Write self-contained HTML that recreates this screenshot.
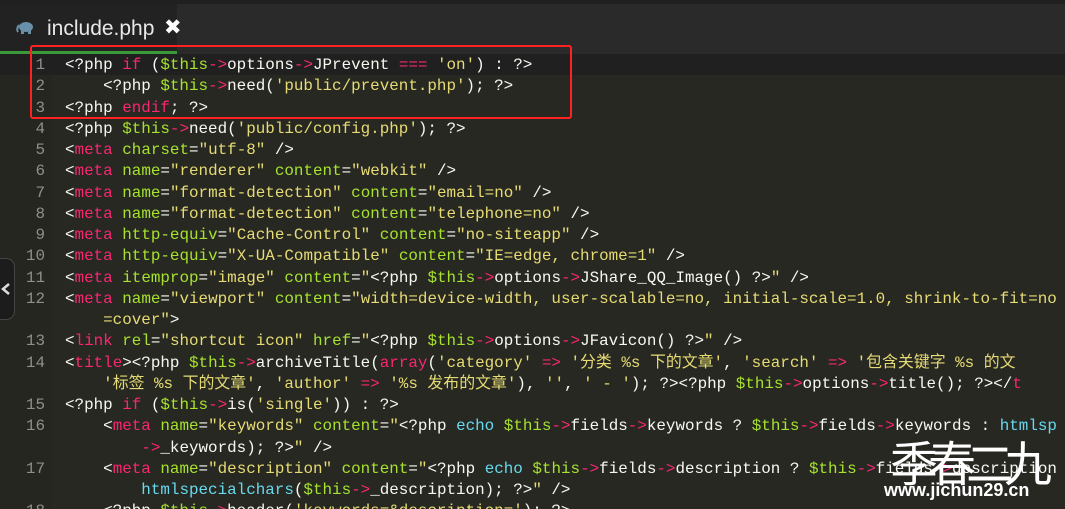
<!DOCTYPE html>
<html><head><meta charset="utf-8"><style>
html,body{margin:0;padding:0;width:1065px;height:509px;overflow:hidden;background:#272822;position:relative}
.top{position:absolute;left:0;top:0;width:1065px;height:4px;background:#202020}
.tabbar{position:absolute;left:0;top:4px;width:1065px;height:50px;background:#2a2a2a}
.tab{position:absolute;left:0;top:4px;width:177px;height:48px;background:#222}
.tabline{position:absolute;left:0;top:51px;width:177px;height:3px;background:#3a9a3a}
.tabtxt{position:absolute;left:47px;top:17px;font:21px "Liberation Sans",sans-serif;color:#e8e8e8;white-space:nowrap}
.x{position:absolute;left:164px;top:15px;font:bold 21px "DejaVu Sans",sans-serif;color:#fff}
.strip{position:absolute;left:0;top:54px;width:1065px;height:21px;background:#202020}
.gutter{position:absolute;left:0;top:75px;width:52px;height:434px;background:#262621}
pre{position:absolute;margin:0;top:55px;font:15.9px/21.25px "Liberation Mono","Noto Sans CJK SC",monospace;color:#f8f8f2;white-space:pre}
.ln{left:0;width:45px;text-align:right;color:#8f908a}
.code{left:65px}
.p{color:#f92672}.g{color:#a6e22e}.y{color:#e6db74}.c{color:#66d9ef}
.box{position:absolute;left:30px;top:45px;width:538px;height:70px;border:2.5px solid #ff2222;border-radius:3px}
.btn{position:absolute;left:-12px;top:258px;width:27px;height:62px;background:#1c1c1c;border:1px solid #444;border-radius:9px;box-sizing:border-box}
.wm1{position:absolute;left:890px;top:432px;font:48px "Noto Sans CJK SC",sans-serif;color:#fff;line-height:56px;letter-spacing:-10px;white-space:nowrap}
.wm2{position:absolute;left:884px;top:480px;font:bold 18px "Liberation Sans",sans-serif;color:#fff;white-space:nowrap}
</style></head><body>
<div class="top"></div><div class="tabbar"></div><div class="tab"></div><div class="tabline"></div>
<svg style="position:absolute;left:16px;top:21px" width="18" height="14" viewBox="0 0 18 14"><ellipse cx="10" cy="6" rx="7" ry="5" fill="#6a8fa8"/><rect x="5" y="8" width="3" height="5" fill="#6a8fa8"/><rect x="12" y="8" width="3" height="5" fill="#6a8fa8"/><path d="M3 4 Q0 8 2 11" stroke="#6a8fa8" stroke-width="2" fill="none"/></svg>
<div class="tabtxt">include.php</div><div class="x">✖</div>
<div class="strip"></div><div class="gutter"></div>
<pre class="ln">1
2
3
4
5
6
7
8
9
10
11
12

13
14

15
16

17

18</pre>
<pre class="code">&lt;?php <span class="p">if</span> (<span class="g">$this</span><span class="p">-&gt;</span>options<span class="p">-&gt;</span>JPrevent <span class="p">===</span> <span class="y">'on'</span>) : ?&gt;
    &lt;?php <span class="g">$this</span><span class="p">-&gt;</span>need(<span class="y">'public/prevent.php'</span>); ?&gt;
&lt;?php <span class="p">endif</span>; ?&gt;
&lt;?php <span class="g">$this</span><span class="p">-&gt;</span>need(<span class="y">'public/config.php'</span>); ?&gt;
&lt;<span class="p">meta</span> <span class="g">charset</span>=<span class="y">"utf-8"</span> /&gt;
&lt;<span class="p">meta</span> <span class="g">name</span>=<span class="y">"renderer"</span> <span class="g">content</span>=<span class="y">"webkit"</span> /&gt;
&lt;<span class="p">meta</span> <span class="g">name</span>=<span class="y">"format-detection"</span> <span class="g">content</span>=<span class="y">"email=no"</span> /&gt;
&lt;<span class="p">meta</span> <span class="g">name</span>=<span class="y">"format-detection"</span> <span class="g">content</span>=<span class="y">"telephone=no"</span> /&gt;
&lt;<span class="p">meta</span> <span class="g">http-equiv</span>=<span class="y">"Cache-Control"</span> <span class="g">content</span>=<span class="y">"no-siteapp"</span> /&gt;
&lt;<span class="p">meta</span> <span class="g">http-equiv</span>=<span class="y">"X-UA-Compatible"</span> <span class="g">content</span>=<span class="y">"IE=edge, chrome=1"</span> /&gt;
&lt;<span class="p">meta</span> <span class="g">itemprop</span>=<span class="y">"image"</span> <span class="g">content</span>=<span class="y">"</span>&lt;?php <span class="g">$this</span><span class="p">-&gt;</span>options<span class="p">-&gt;</span>JShare_QQ_Image() ?&gt;<span class="y">"</span> /&gt;
&lt;<span class="p">meta</span> <span class="g">name</span>=<span class="y">"viewport"</span> <span class="g">content</span>=<span class="y">"width=device-width, user-scalable=no, initial-scale=1.0, shrink-to-fit=no</span>
<span class="y">    =cover"</span>&gt;
&lt;<span class="p">link</span> <span class="g">rel</span>=<span class="y">"shortcut icon"</span> <span class="g">href</span>=<span class="y">"</span>&lt;?php <span class="g">$this</span><span class="p">-&gt;</span>options<span class="p">-&gt;</span>JFavicon() ?&gt;<span class="y">"</span> /&gt;
&lt;<span class="p">title</span>&gt;&lt;?php <span class="g">$this</span><span class="p">-&gt;</span>archiveTitle(<span class="p">array</span>(<span class="y">'category'</span> <span class="p">=&gt;</span> <span class="y">'分类 %s 下的文章'</span>, <span class="y">'search'</span> <span class="p">=&gt;</span> <span class="y">'包含关键字 %s 的文</span>
    <span class="y">'标签 %s 下的文章'</span>, <span class="y">'author'</span> <span class="p">=&gt;</span> <span class="y">'%s 发布的文章'</span>), <span class="y">''</span>, <span class="y">' - '</span>); ?&gt;&lt;?php <span class="g">$this</span><span class="p">-&gt;</span>options<span class="p">-&gt;</span>title(); ?&gt;&lt;/<span class="p">t</span>
&lt;?php <span class="p">if</span> (<span class="g">$this</span><span class="p">-&gt;</span>is(<span class="y">'single'</span>)) : ?&gt;
    &lt;<span class="p">meta</span> <span class="g">name</span>=<span class="y">"keywords"</span> <span class="g">content</span>=<span class="y">"</span>&lt;?php <span class="c">echo</span> <span class="g">$this</span><span class="p">-&gt;</span>fields<span class="p">-&gt;</span>keywords ? <span class="g">$this</span><span class="p">-&gt;</span>fields<span class="p">-&gt;</span>keywords : <span class="c">htmlsp</span>
        <span class="p">-&gt;</span>_keywords); ?&gt;<span class="y">"</span> /&gt;
    &lt;<span class="p">meta</span> <span class="g">name</span>=<span class="y">"description"</span> <span class="g">content</span>=<span class="y">"</span>&lt;?php <span class="c">echo</span> <span class="g">$this</span><span class="p">-&gt;</span>fields<span class="p">-&gt;</span>description ? <span class="g">$this</span><span class="p">-&gt;</span>fields<span class="p">-&gt;</span>description
        <span class="c">htmlspecialchars</span>(<span class="g">$this</span><span class="p">-&gt;</span>_description); ?&gt;<span class="y">"</span> /&gt;
    &lt;?php <span class="g">$this</span><span class="p">-&gt;</span>header(<span class="y">'keywords=&amp;description='</span>); ?&gt;</pre>
<div class="box"></div>
<div class="btn"></div>
<svg style="position:absolute;left:0;top:281px" width="12" height="16" viewBox="0 0 12 16"><path d="M9 3 L3 8 L9 13" stroke="#ddd" stroke-width="2.5" fill="none"/></svg>
<div class="wm1">季春二九</div>
<div class="wm2">www.jichun29.cn</div>
</body></html>
